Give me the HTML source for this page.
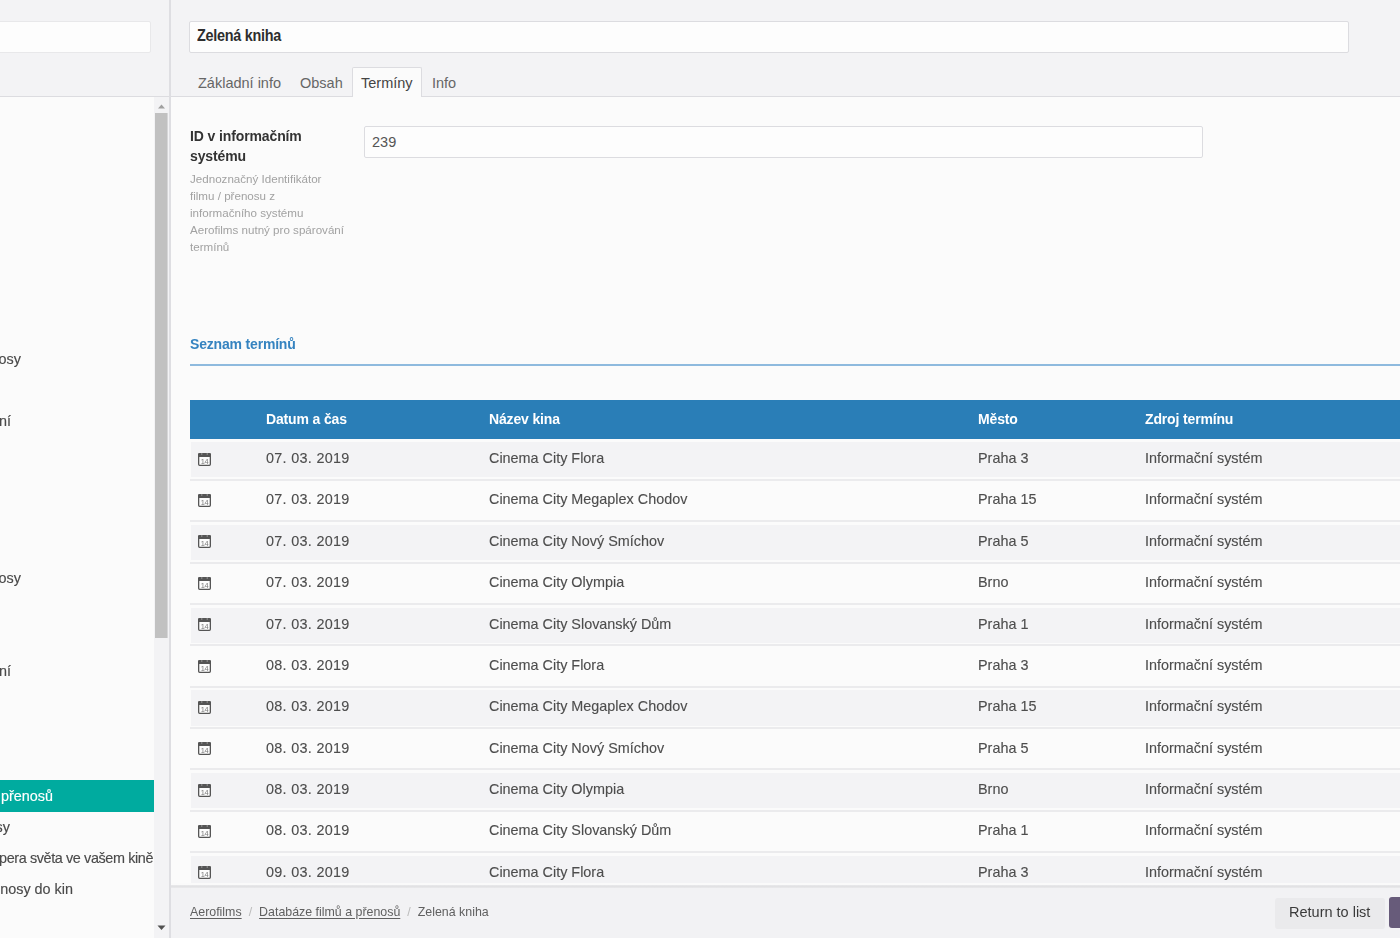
<!DOCTYPE html>
<html><head><meta charset="utf-8">
<style>
*{box-sizing:border-box;margin:0;padding:0}
html,body{width:1400px;height:938px;overflow:hidden;background:#fbfbfb;font-family:"Liberation Sans",sans-serif;color:#4a4a4a}
#wrap{position:absolute;left:0;top:0;width:1400px;height:938px;overflow:hidden;filter:blur(0.3px)}
.a{position:absolute}
.t{position:absolute;white-space:nowrap;line-height:1}
#sbtop{left:0;top:0;width:170px;height:96px;background:#f3f3f5}
#maintop{left:170px;top:0;width:1230px;height:96px;background:#f3f3f5}
#hline{left:0;top:96px;width:1400px;height:1px;background:#dcdce0}
#vline{left:169px;top:0;width:2px;height:938px;background:#dedee2}
.inp{position:absolute;background:#fdfdfd;border:1px solid #dcdce0;border-radius:2px}
#track{left:154px;top:97px;width:15px;height:841px;background:#f3f3f5}
#thumb{left:155px;top:113px;width:13px;height:525px;background:#c1c1c1;border-right:1.5px solid #d6d6d8}
.tab{color:#666;font-size:14.5px}
.row{position:absolute;left:190px;width:1210px;height:41.37px}
.row .bg{position:absolute;left:1px;top:2.5px;right:0;bottom:3.5px}
.row .sep{position:absolute;left:0;right:0;bottom:0;height:2px;background:#ebebed}
.odd .bg{background:#f3f3f5}
.cell{-webkit-text-stroke:0.12px #4d4d4d;position:absolute;font-size:14.4px;color:#4d4d4d;white-space:nowrap;line-height:1;top:11.5px}
.hd{position:absolute;font-size:14px;font-weight:bold;color:#fff;white-space:nowrap;line-height:1;letter-spacing:-0.15px}
.si{position:absolute;white-space:nowrap;font-size:14.4px;line-height:1;color:#4a4a4a;margin-top:1px;-webkit-text-stroke:0.15px currentColor}
.bc{font-size:12.4px;color:#606060}
.bc u{text-decoration:underline;text-underline-offset:2px}
.sl{color:#bbb;margin:0 7px}
.cal{position:absolute;left:8px;top:13.2px;width:13px;height:13px}
</style></head><body><div id="wrap">
<div class="a" id="sbtop"></div>
<div class="a" id="maintop"></div>
<div class="inp" style="left:-10px;top:21px;width:161px;height:32px;border-color:#e8e8ea"></div>
<div class="inp" style="left:189px;top:21px;width:1160px;height:32px"></div>
<div class="t" style="left:197px;top:27.5px;font-size:16px;font-weight:bold;color:#2e2e2e;letter-spacing:-0.3px;transform:scaleX(0.9);transform-origin:0 0">Zelená kniha</div>

<!-- tabs -->
<div class="a" style="left:352px;top:67px;width:70px;height:30px;background:#fbfbfb;border:1px solid #dcdce0;border-bottom:none;border-radius:2px 2px 0 0;z-index:2"></div>
<div class="t tab" style="left:198px;top:76px">Základní info</div>
<div class="t tab" style="left:300px;top:76px">Obsah</div>
<div class="t tab" style="left:361px;top:76px;color:#444;z-index:3">Termíny</div>
<div class="t tab" style="left:432px;top:76px">Info</div>
<div class="a" id="hline"></div>

<!-- sidebar -->
<div class="a" id="track"></div>
<div class="a" id="thumb"></div>
<!-- sidebar list -->
<div class="a" style="left:0;top:97px;width:154px;height:841px;overflow:hidden">
<div class="a" style="left:0;top:683px;width:154px;height:32px;background:#00ab9f"></div>
<div class="si" style="right:133px;top:254px">Přenosy</div>
<div class="si" style="right:143px;top:316px">Vysílání</div>
<div class="si" style="right:133px;top:473px">Přenosy</div>
<div class="si" style="right:143px;top:566px">Vysílání</div>
<div class="si" style="right:101px;top:691px;color:#fff">Databáze filmů a přenosů</div>
<div class="si" style="right:144px;top:722px">Přenosy</div>
<div class="si" style="left:-11.8px;top:753px;letter-spacing:-0.38px">Opera světa ve vašem kině</div>
<div class="si" style="right:81px;top:784px">Přenosy do kin</div>
</div>
<svg class="a" style="left:157px;top:103px" width="9" height="6" viewBox="0 0 9 6"><path d="M1 5.5 L4.5 1.5 L8 5.5Z" fill="#a0a0a0"/></svg>
<svg class="a" style="left:157px;top:925px" width="9" height="6" viewBox="0 0 9 6"><path d="M0.5 0.5 L4.5 5 L8.5 0.5Z" fill="#505050"/></svg>
<div class="a" id="vline"></div>

<!-- form -->
<div class="t" style="left:190px;top:126px;font-size:14px;font-weight:bold;color:#333;line-height:20px;white-space:normal;width:180px;letter-spacing:-0.12px">ID v informačním<br>systému</div>
<div class="t" style="left:190px;top:170px;font-size:11.6px;color:#a2a2a2;line-height:17.1px">Jednoznačný Identifikátor<br>filmu / přenosu z<br>informačního systému<br>Aerofilms nutný pro spárování<br>termínů</div>
<div class="inp" style="left:364px;top:126px;width:839px;height:32px"></div>
<div class="t" style="left:372px;top:135px;font-size:14.5px;color:#555">239</div>

<div class="t" style="left:190px;top:337.3px;font-size:14px;font-weight:bold;color:#3583c0;letter-spacing:-0.18px">Seznam termínů</div>
<div class="a" style="left:190px;top:364px;width:1210px;height:2px;background:#8ebade"></div>

<!-- table header -->
<div class="a" style="left:190px;top:400px;width:1210px;height:38.6px;background:#2a7eb7"></div>
<div class="hd" style="left:266px;top:412px">Datum a čas</div>
<div class="hd" style="left:489px;top:412px">Název kina</div>
<div class="hd" style="left:978px;top:412px">Město</div>
<div class="hd" style="left:1145px;top:412px">Zdroj termínu</div>

<!--ROWS--><div class="row odd" style="top:439.5px"><div class="bg"></div><div class="sep"></div><svg class="cal" width="13" height="13" viewBox="0 0 13 13"><rect x="0.65" y="0.65" width="11.7" height="11.7" rx="1" fill="#fcfcfc" stroke="#555" stroke-width="1.3"/><rect x="0" y="0.2" width="13" height="3.8" rx="1" fill="#555"/><rect x="3" y="0.2" width="1.4" height="1.6" fill="#8d8d8d"/><rect x="8.6" y="0.2" width="1.4" height="1.6" fill="#8d8d8d"/><text x="6.6" y="11" font-size="7.4" text-anchor="middle" fill="#7a7a7a" font-family="Liberation Sans" letter-spacing="-0.3">14</text></svg><div class="cell" style="left:76px;letter-spacing:0.3px">07. 03. 2019</div><div class="cell" style="left:299px">Cinema City Flora</div><div class="cell" style="left:788px">Praha 3</div><div class="cell" style="left:955px">Informační systém</div></div>
<div class="row" style="top:480.9px"><div class="bg"></div><div class="sep"></div><svg class="cal" width="13" height="13" viewBox="0 0 13 13"><rect x="0.65" y="0.65" width="11.7" height="11.7" rx="1" fill="#fcfcfc" stroke="#555" stroke-width="1.3"/><rect x="0" y="0.2" width="13" height="3.8" rx="1" fill="#555"/><rect x="3" y="0.2" width="1.4" height="1.6" fill="#8d8d8d"/><rect x="8.6" y="0.2" width="1.4" height="1.6" fill="#8d8d8d"/><text x="6.6" y="11" font-size="7.4" text-anchor="middle" fill="#7a7a7a" font-family="Liberation Sans" letter-spacing="-0.3">14</text></svg><div class="cell" style="left:76px;letter-spacing:0.3px">07. 03. 2019</div><div class="cell" style="left:299px">Cinema City Megaplex Chodov</div><div class="cell" style="left:788px">Praha 15</div><div class="cell" style="left:955px">Informační systém</div></div>
<div class="row odd" style="top:522.2px"><div class="bg"></div><div class="sep"></div><svg class="cal" width="13" height="13" viewBox="0 0 13 13"><rect x="0.65" y="0.65" width="11.7" height="11.7" rx="1" fill="#fcfcfc" stroke="#555" stroke-width="1.3"/><rect x="0" y="0.2" width="13" height="3.8" rx="1" fill="#555"/><rect x="3" y="0.2" width="1.4" height="1.6" fill="#8d8d8d"/><rect x="8.6" y="0.2" width="1.4" height="1.6" fill="#8d8d8d"/><text x="6.6" y="11" font-size="7.4" text-anchor="middle" fill="#7a7a7a" font-family="Liberation Sans" letter-spacing="-0.3">14</text></svg><div class="cell" style="left:76px;letter-spacing:0.3px">07. 03. 2019</div><div class="cell" style="left:299px">Cinema City Nový Smíchov</div><div class="cell" style="left:788px">Praha 5</div><div class="cell" style="left:955px">Informační systém</div></div>
<div class="row" style="top:563.6px"><div class="bg"></div><div class="sep"></div><svg class="cal" width="13" height="13" viewBox="0 0 13 13"><rect x="0.65" y="0.65" width="11.7" height="11.7" rx="1" fill="#fcfcfc" stroke="#555" stroke-width="1.3"/><rect x="0" y="0.2" width="13" height="3.8" rx="1" fill="#555"/><rect x="3" y="0.2" width="1.4" height="1.6" fill="#8d8d8d"/><rect x="8.6" y="0.2" width="1.4" height="1.6" fill="#8d8d8d"/><text x="6.6" y="11" font-size="7.4" text-anchor="middle" fill="#7a7a7a" font-family="Liberation Sans" letter-spacing="-0.3">14</text></svg><div class="cell" style="left:76px;letter-spacing:0.3px">07. 03. 2019</div><div class="cell" style="left:299px">Cinema City Olympia</div><div class="cell" style="left:788px">Brno</div><div class="cell" style="left:955px">Informační systém</div></div>
<div class="row odd" style="top:605.0px"><div class="bg"></div><div class="sep"></div><svg class="cal" width="13" height="13" viewBox="0 0 13 13"><rect x="0.65" y="0.65" width="11.7" height="11.7" rx="1" fill="#fcfcfc" stroke="#555" stroke-width="1.3"/><rect x="0" y="0.2" width="13" height="3.8" rx="1" fill="#555"/><rect x="3" y="0.2" width="1.4" height="1.6" fill="#8d8d8d"/><rect x="8.6" y="0.2" width="1.4" height="1.6" fill="#8d8d8d"/><text x="6.6" y="11" font-size="7.4" text-anchor="middle" fill="#7a7a7a" font-family="Liberation Sans" letter-spacing="-0.3">14</text></svg><div class="cell" style="left:76px;letter-spacing:0.3px">07. 03. 2019</div><div class="cell" style="left:299px">Cinema City Slovanský Dům</div><div class="cell" style="left:788px">Praha 1</div><div class="cell" style="left:955px">Informační systém</div></div>
<div class="row" style="top:646.4px"><div class="bg"></div><div class="sep"></div><svg class="cal" width="13" height="13" viewBox="0 0 13 13"><rect x="0.65" y="0.65" width="11.7" height="11.7" rx="1" fill="#fcfcfc" stroke="#555" stroke-width="1.3"/><rect x="0" y="0.2" width="13" height="3.8" rx="1" fill="#555"/><rect x="3" y="0.2" width="1.4" height="1.6" fill="#8d8d8d"/><rect x="8.6" y="0.2" width="1.4" height="1.6" fill="#8d8d8d"/><text x="6.6" y="11" font-size="7.4" text-anchor="middle" fill="#7a7a7a" font-family="Liberation Sans" letter-spacing="-0.3">14</text></svg><div class="cell" style="left:76px;letter-spacing:0.3px">08. 03. 2019</div><div class="cell" style="left:299px">Cinema City Flora</div><div class="cell" style="left:788px">Praha 3</div><div class="cell" style="left:955px">Informační systém</div></div>
<div class="row odd" style="top:687.7px"><div class="bg"></div><div class="sep"></div><svg class="cal" width="13" height="13" viewBox="0 0 13 13"><rect x="0.65" y="0.65" width="11.7" height="11.7" rx="1" fill="#fcfcfc" stroke="#555" stroke-width="1.3"/><rect x="0" y="0.2" width="13" height="3.8" rx="1" fill="#555"/><rect x="3" y="0.2" width="1.4" height="1.6" fill="#8d8d8d"/><rect x="8.6" y="0.2" width="1.4" height="1.6" fill="#8d8d8d"/><text x="6.6" y="11" font-size="7.4" text-anchor="middle" fill="#7a7a7a" font-family="Liberation Sans" letter-spacing="-0.3">14</text></svg><div class="cell" style="left:76px;letter-spacing:0.3px">08. 03. 2019</div><div class="cell" style="left:299px">Cinema City Megaplex Chodov</div><div class="cell" style="left:788px">Praha 15</div><div class="cell" style="left:955px">Informační systém</div></div>
<div class="row" style="top:729.1px"><div class="bg"></div><div class="sep"></div><svg class="cal" width="13" height="13" viewBox="0 0 13 13"><rect x="0.65" y="0.65" width="11.7" height="11.7" rx="1" fill="#fcfcfc" stroke="#555" stroke-width="1.3"/><rect x="0" y="0.2" width="13" height="3.8" rx="1" fill="#555"/><rect x="3" y="0.2" width="1.4" height="1.6" fill="#8d8d8d"/><rect x="8.6" y="0.2" width="1.4" height="1.6" fill="#8d8d8d"/><text x="6.6" y="11" font-size="7.4" text-anchor="middle" fill="#7a7a7a" font-family="Liberation Sans" letter-spacing="-0.3">14</text></svg><div class="cell" style="left:76px;letter-spacing:0.3px">08. 03. 2019</div><div class="cell" style="left:299px">Cinema City Nový Smíchov</div><div class="cell" style="left:788px">Praha 5</div><div class="cell" style="left:955px">Informační systém</div></div>
<div class="row odd" style="top:770.5px"><div class="bg"></div><div class="sep"></div><svg class="cal" width="13" height="13" viewBox="0 0 13 13"><rect x="0.65" y="0.65" width="11.7" height="11.7" rx="1" fill="#fcfcfc" stroke="#555" stroke-width="1.3"/><rect x="0" y="0.2" width="13" height="3.8" rx="1" fill="#555"/><rect x="3" y="0.2" width="1.4" height="1.6" fill="#8d8d8d"/><rect x="8.6" y="0.2" width="1.4" height="1.6" fill="#8d8d8d"/><text x="6.6" y="11" font-size="7.4" text-anchor="middle" fill="#7a7a7a" font-family="Liberation Sans" letter-spacing="-0.3">14</text></svg><div class="cell" style="left:76px;letter-spacing:0.3px">08. 03. 2019</div><div class="cell" style="left:299px">Cinema City Olympia</div><div class="cell" style="left:788px">Brno</div><div class="cell" style="left:955px">Informační systém</div></div>
<div class="row" style="top:811.8px"><div class="bg"></div><div class="sep"></div><svg class="cal" width="13" height="13" viewBox="0 0 13 13"><rect x="0.65" y="0.65" width="11.7" height="11.7" rx="1" fill="#fcfcfc" stroke="#555" stroke-width="1.3"/><rect x="0" y="0.2" width="13" height="3.8" rx="1" fill="#555"/><rect x="3" y="0.2" width="1.4" height="1.6" fill="#8d8d8d"/><rect x="8.6" y="0.2" width="1.4" height="1.6" fill="#8d8d8d"/><text x="6.6" y="11" font-size="7.4" text-anchor="middle" fill="#7a7a7a" font-family="Liberation Sans" letter-spacing="-0.3">14</text></svg><div class="cell" style="left:76px;letter-spacing:0.3px">08. 03. 2019</div><div class="cell" style="left:299px">Cinema City Slovanský Dům</div><div class="cell" style="left:788px">Praha 1</div><div class="cell" style="left:955px">Informační systém</div></div>
<div class="row odd" style="top:853.2px"><div class="bg"></div><div class="sep"></div><svg class="cal" width="13" height="13" viewBox="0 0 13 13"><rect x="0.65" y="0.65" width="11.7" height="11.7" rx="1" fill="#fcfcfc" stroke="#555" stroke-width="1.3"/><rect x="0" y="0.2" width="13" height="3.8" rx="1" fill="#555"/><rect x="3" y="0.2" width="1.4" height="1.6" fill="#8d8d8d"/><rect x="8.6" y="0.2" width="1.4" height="1.6" fill="#8d8d8d"/><text x="6.6" y="11" font-size="7.4" text-anchor="middle" fill="#7a7a7a" font-family="Liberation Sans" letter-spacing="-0.3">14</text></svg><div class="cell" style="left:76px;letter-spacing:0.3px">09. 03. 2019</div><div class="cell" style="left:299px">Cinema City Flora</div><div class="cell" style="left:788px">Praha 3</div><div class="cell" style="left:955px">Informační systém</div></div><!--/ROWS-->

<!-- footer -->
<div class="a" style="left:171px;top:883px;width:1229px;height:55px;background:#f2f2f4;border-top:2px solid #fafafa"></div>
<div class="a" style="left:171px;top:885px;width:1229px;height:3px;background:linear-gradient(#e9e9eb,#e2e2e4,#e9e9eb)"></div>
<div class="t bc" style="left:190px;top:906px"><u>Aerofilms</u><span class="sl">/</span><u>Databáze filmů a přenosů</u><span class="sl">/</span>Zelená kniha</div>
<div class="a" style="left:1275px;top:897.5px;width:110px;height:31px;background:#eaeaec;border-radius:3px"></div>
<div class="t" style="left:1289px;top:905px;font-size:14.5px;color:#3a3a3a">Return to list</div>
<div class="a" style="left:1389px;top:897px;width:30px;height:31px;background:#675b7a;border-radius:3px"></div>
</div></body></html>
